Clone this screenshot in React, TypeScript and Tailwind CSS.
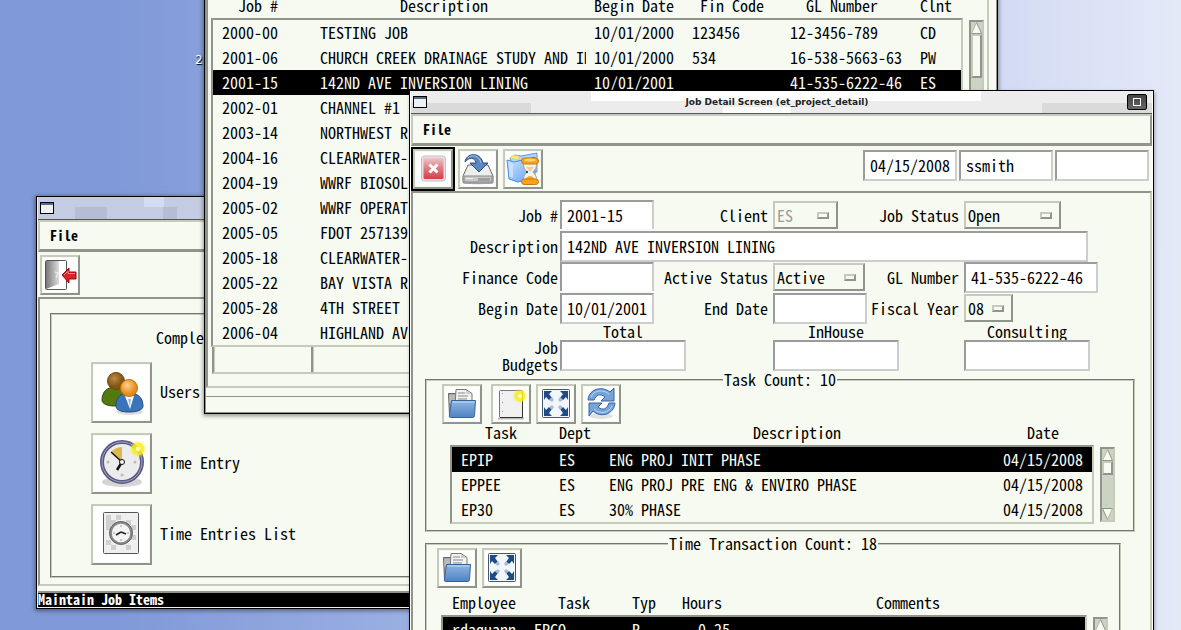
import React from "react";
import clsx from "clsx";

interface Job {
  job: string;
  description: string;
  begin?: string;
  fin?: string;
  gl?: string;
  client?: string;
}

const jobs: Job[] = [
  { job: "2000-00", description: "TESTING JOB", begin: "10/01/2000", fin: "123456", gl: "12-3456-789", client: "CD" },
  { job: "2001-06", description: "CHURCH CREEK DRAINAGE STUDY AND IMP", begin: "10/01/2000", fin: "534", gl: "16-538-5663-63", client: "PW" },
  { job: "2001-15", description: "142ND AVE INVERSION LINING", begin: "10/01/2001", gl: "41-535-6222-46", client: "ES" },
  { job: "2002-01", description: "CHANNEL #1" },
  { job: "2003-14", description: "NORTHWEST R" },
  { job: "2004-16", description: "CLEARWATER-" },
  { job: "2004-19", description: "WWRF BIOSOL" },
  { job: "2005-02", description: "WWRF OPERAT" },
  { job: "2005-05", description: "FDOT 257139" },
  { job: "2005-18", description: "CLEARWATER-" },
  { job: "2005-22", description: "BAY VISTA R" },
  { job: "2005-28", description: "4TH STREET" },
  { job: "2006-04", description: "HIGHLAND AV" },
];

const tasks = [
  { task: "EPIP", dept: "ES", description: "ENG PROJ INIT PHASE", date: "04/15/2008" },
  { task: "EPPEE", dept: "ES", description: "ENG PROJ PRE ENG & ENVIRO PHASE", date: "04/15/2008" },
  { task: "EP30", dept: "ES", description: "30% PHASE", date: "04/15/2008" },
];

const raised = "border-2 border-t-[#c6cabb] border-l-[#c6cabb] border-r-[#91948a] border-b-[#91948a]";
const sunken = "border-2 border-t-[#91948a] border-l-[#91948a] border-r-[#c6cabb] border-b-[#c6cabb]";

/* ---------- icons ---------- */

function Spark({ x, y, r }: { x: number; y: number; r: number }) {
  return (
    <g>
      <circle cx={x} cy={y} r={r} fill="#f8ef30" opacity="0.35" />
      <circle cx={x} cy={y} r={r * 0.8} fill="#f8ee1c" opacity="0.8" />
      <circle cx={x} cy={y} r={r * 0.3} fill="#fffbb0" />
    </g>
  );
}

function ExitIcon() {
  return (
    <svg viewBox="0 0 36 36" className="size-9">
      <defs>
        <linearGradient id="door" x1="0" x2="1">
          <stop offset="0" stopColor="#777" />
          <stop offset="1" stopColor="#ddd" />
        </linearGradient>
      </defs>
      <rect x="3.5" y="3.5" width="21" height="29" rx="1" fill="#fff" stroke="#555" />
      <path d="M4 4H17V27L4 32Z" fill="url(#door)" />
      <path d="M13 15l3 1-2 5" fill="none" stroke="#eee" strokeWidth="1.3" />
      <path d="M20 18l7-7v4h7v7h-7v4z" fill="#dc2222" stroke="#98090f" />
      <path d="M22 18l4-4v2.5h7" fill="none" stroke="#f58a8a" />
    </svg>
  );
}

function CloseIcon() {
  return (
    <svg viewBox="0 0 36 36" className="size-9">
      <defs>
        <linearGradient id="red" x1="0" x2="0" y1="0" y2="1">
          <stop offset="0" stopColor="#f0c4c8" />
          <stop offset="0.45" stopColor="#e08088" />
          <stop offset="1" stopColor="#d24048" />
        </linearGradient>
      </defs>
      <rect x="6.5" y="5" width="24" height="25" rx="3" fill="#e8dfe0" stroke="#c9bdbf" />
      <rect x="8.5" y="7" width="20" height="21" rx="1.5" fill="url(#red)" />
      <path d="M14.5 13.5l8 8m0-8l-8 8" stroke="#fff" strokeWidth="3" />
    </svg>
  );
}

function SaveIcon() {
  return (
    <svg viewBox="0 0 36 36" className="size-9">
      <ellipse cx="18" cy="31" rx="15" ry="2.5" fill="#ddd" />
      <path d="M8 14h20l5 11v6q0 1-1 1H4q-1 0-1-1v-6z" fill="#eeeeec" stroke="#666" />
      <path d="M4 25h28v6H4z" fill="#c8c8c8" stroke="#888" />
      <path d="M19 27v3m2-3v3m2-3v3m2-3v3m2-3v3m2-3v3" stroke="#777" />
      <path d="M6 27.5h7" stroke="#eee" />
      <path d="M5 11C6 2 20 0 23 12h5l-9 9-9-9h6C15 6 9 6 5 11z" fill="#5b86bd" stroke="#2b4f83" />
      <path d="M8 7c4-4 11-3 13 5" fill="none" stroke="#a9c4e6" />
    </svg>
  );
}

function PendingIcon() {
  return (
    <svg viewBox="0 0 36 36" className="size-9">
      <defs>
        <linearGradient id="pending" x1="0" x2="1" y1="0" y2="1">
          <stop offset="0" stopColor="#d4e8ff" />
          <stop offset="1" stopColor="#5d9ff2" />
        </linearGradient>
      </defs>
      <path d="M5 7l5-3 6 1 16-3v19H9z" fill="#b5d5fb" stroke="#5b95e8" />
      <path d="M5 7l3-3 6 1v4z" fill="#f6e68c" stroke="#dcc66a" strokeWidth="0.5" />
      <path d="M2 9l7 2 21-5v21l-17 4-9-3z" fill="url(#pending)" stroke="#4c8ae4" />
      <path d="M4 11l4 2v14l-4-2z" fill="#c9e1ff" />
      <path d="M18 11h14q0 7-4 10 4 3 4 10H18q0-7 4-10-4-3-4-10z" fill="#eef2f5" stroke="#b9a274" />
      <path d="M21 16h8l-4 5z" fill="#f4cf8d" />
      <path d="M19 30q3-5 6-5t6 5z" fill="#f4a52d" />
      <rect x="16.500" y="7" width="17" height="6" rx="3" fill="#f6a21c" stroke="#c97a08" />
      <ellipse cx="25" cy="9" rx="6" ry="1.5" fill="#fcd382" />
      <rect x="16.500" y="28" width="17" height="5.500" rx="2.700" fill="#f6a21c" stroke="#c97a08" />
      <circle cx="22" cy="21" r="1" fill="#222" />
    </svg>
  );
}

function FolderIcon() {
  return (
    <svg viewBox="0 0 36 36" className="size-9">
      <defs>
        <linearGradient id="folder" x1="0" x2="0" y1="0" y2="1">
          <stop offset="0" stopColor="#8fb6e3" />
          <stop offset="1" stopColor="#4f82c0" />
        </linearGradient>
      </defs>
      <path d="M4.500 7.500h8v22h-7z" fill="#a5a5a5" stroke="#666" />
      <path d="M5 10h7m-7 2h7m-7 2h7m-7 2h7" stroke="#ccc" />
      <path d="M12 3.500h10l6 4v12H11z" fill="#f2f2f0" stroke="#777" />
      <path d="M14 7h7m-7 3h10m-10 3h9" stroke="#888" />
      <path d="M22 4v4h5z" fill="#ccc" />
      <path d="M7.500 14.500h24l-1 15q0 2-2 2h-22q-2 0-1-3z" fill="url(#folder)" stroke="#34649f" />
      <path d="M8.500 16h22" stroke="#c5dbf3" />
    </svg>
  );
}

function NewDocIcon() {
  return (
    <svg viewBox="0 0 36 36" className="size-9">
      <path d="M5 32.500h26" stroke="#bbb" strokeWidth="2" />
      <rect x="6.500" y="4.500" width="23" height="27" rx="1" fill="#f1f0f1" stroke="#777" />
      <path d="M29.500 7v24.500H7" fill="none" stroke="#333" />
      <path d="M9.500 7v22" stroke="#999" strokeDasharray="1 8" />
      <Spark x={27} y={10} r={7} />
    </svg>
  );
}

function ExpandIcon() {
  return (
    <svg viewBox="0 0 36 36" className="size-9">
      <rect x="4.500" y="3.500" width="27" height="28" rx="1" fill="#f2f6fb" stroke="#49566e" />
      <path d="M6 5h8l-3 3 3 4-3 2-3-3-2 3z" fill="#1f4a85" />
      <path d="M30 5h-8l3 3-3 4 3 2 3-3 2 3z" fill="#1f4a85" />
      <path d="M6 30h8l-3-3 3-4-3-2-3 3-2-3z" fill="#1f4a85" />
      <path d="M30 30h-8l3-3-3-4 3-2 3 3 2-3z" fill="#1f4a85" />
      <path d="M11 14l3-3 2 3-2 2zM25 14l-3-3-2 3 2 2zM11 21l3 3 2-3-2-2zM25 21l-3 3-2-3 2-2z" fill="#a9bdd8" />
    </svg>
  );
}

function RefreshIcon() {
  return (
    <svg viewBox="0 0 36 36" className="size-9">
      <ellipse cx="18" cy="30" rx="12" ry="3" fill="#e2e2e2" />
      <path d="M5 14C6 2 20 0 27 6l4-4v13H18l4-4c-5-4-9-2-11 3z" fill="#76a3d9" stroke="#3465a4" />
      <path d="M32 17c-1 12-15 15-22 8l-4 5V17h13l-4 4c5 4 9 2 11-4z" fill="#76a3d9" stroke="#3465a4" />
      <path d="M8 11C11 4 20 3 26 8m3 12c-3 7-12 9-18 3" fill="none" stroke="#c2d8f2" />
    </svg>
  );
}

function UsersIcon() {
  return (
    <svg viewBox="0 0 57 57" className="size-[57px]">
      <defs>
        <radialGradient id="brown" cx="0.4" cy="0.35">
          <stop offset="0" stopColor="#b98a48" />
          <stop offset="1" stopColor="#80530f" />
        </radialGradient>
        <radialGradient id="orange" cx="0.4" cy="0.35">
          <stop offset="0" stopColor="#fdd28c" />
          <stop offset="1" stopColor="#e68c1c" />
        </radialGradient>
      </defs>
      <ellipse cx="37" cy="48" rx="13" ry="3" fill="#ddd" />
      <path d="M9 36c0-8 5-13 13-13 7 0 11 5 11 12 0 5-5 7-12 7-6 0-12-2-12-6z" fill="#527a10" stroke="#33500a" />
      <circle cx="23" cy="17" r="8.500" fill="url(#brown)" stroke="#6f4a11" />
      <path d="M23 42c0-9 5-13 13-13s14 4 14 13c0 4-6 6-14 6s-13-2-13-6z" fill="#3c74b8" stroke="#1f4a87" />
      <path d="M32 32h9l-4 13z" fill="#fff" />
      <path d="M35 35h3l-1 8z" fill="#9fb6d6" />
      <circle cx="36" cy="24" r="8.500" fill="url(#orange)" stroke="#bb6f10" />
    </svg>
  );
}

function TimeIcon() {
  return (
    <svg viewBox="0 0 57 57" className="size-[57px]">
      <ellipse cx="29" cy="47" rx="20" ry="5" fill="#d5d5d5" />
      <circle cx="29" cy="27" r="20" fill="#ececec" stroke="#5a5a83" strokeWidth="4" />
      <circle cx="29" cy="27" r="20" fill="none" stroke="#a0a0c0" />
      <path d="M29 27L18 17q5-5 11-5z" fill="#dcb94e" />
      <circle cx="29" cy="40" r="1.5" fill="#bbb" />
      <circle cx="15" cy="27" r="1.5" fill="#bbb" />
      <circle cx="42" cy="27" r="1.5" fill="#bbb" />
      <path d="M29 27L18 17" stroke="#111" strokeWidth="1.500" />
      <path d="M29 27l-5 8" stroke="#111" strokeWidth="2.500" />
      <circle cx="29" cy="27" r="2.500" fill="#fff" stroke="#111" />
      <Spark x={45} y={14} r={8} />
    </svg>
  );
}

function TimeListIcon() {
  return (
    <svg viewBox="0 0 57 57" className="size-[57px]">
      <rect x="10.500" y="6.500" width="35" height="41" rx="1" fill="#efefef" stroke="#555" />
      <path d="M13 9h5v5h-5zM18 14h5v5h-5zM23 9h5v5h-5zM13 19h5v5h-5zM33 14h5v5h-5zM38 19h5v5h-5zM13 34h5v5h-5zM38 29h5v5h-5zM18 39h5v5h-5zM33 39h5v5h-5zM13 14h5v5h-5z" fill="#cfcfcf" />
      <circle cx="28" cy="27" r="10.500" fill="#f4f4f4" stroke="#888" strokeWidth="2.500" />
      <circle cx="28" cy="27" r="11.500" fill="none" stroke="#555" strokeWidth="0.700" />
      <path d="M28 26l-5 3m5-3l5 2" stroke="#222" strokeWidth="1.600" />
      <path d="M28 19v2m0 12v2m-8-8h2m12 0h2" stroke="#999" />
    </svg>
  );
}

/* ---------- widgets ---------- */

interface ToolButtonProps {
  label: string;
  focused?: boolean;
  className?: string;
  children: React.ReactNode;
}

function ToolButton({ label, focused, className, children }: ToolButtonProps) {
  return (
    <button
      type="button"
      aria-label={label}
      className={clsx(
        "shrink-0 bg-white shadow-[inset_0_0_0_1px_#f7faf0]",
        raised,
        focused && "outline-2 outline-black",
        className
      )}
    >
      {children}
    </button>
  );
}

function TitleIcon() {
  return <span className="relative block h-3 w-3.5 border border-black bg-[#eef2f4] shadow-[inset_0_2px_0_#4f6b94]" />;
}

function MenuBar() {
  return (
    <nav className={clsx("flex h-8 items-center border-b-3 pb-0.5 pl-2.5 text-sm leading-4 font-bold", raised)}>
      <button type="button">File</button>
    </nav>
  );
}

interface FieldProps {
  id: string;
  label?: string;
  value?: string;
  className?: string;
}

function Field({ id, label, value = "", className }: FieldProps) {
  return (
    <input
      id={id}
      aria-label={label}
      defaultValue={value}
      className={clsx(
        "min-w-0 border-2 border-t-[#9b9b9e] border-l-[#9b9b9e] border-r-[#cdcdd0] border-b-[#cdcdd0] bg-white pb-0.5 pl-[5px]",
        className
      )}
    />
  );
}

function Choice({ id, value, disabled, className }: FieldProps & { disabled?: boolean }) {
  return (
    <div className={clsx("relative mt-px h-7", className)}>
      <select
        id={id}
        disabled={disabled}
        className={clsx("h-full w-full appearance-none pl-0.5 leading-6 disabled:text-[#9c9c96] disabled:opacity-100", raised)}
      >
        <option>{value}</option>
      </select>
      <span className={clsx("pointer-events-none absolute top-[11px] right-[9px] h-[7px] w-3", raised)} />
    </div>
  );
}

interface LabelProps {
  htmlFor: string;
  first?: boolean;
  children: string;
}

function Label({ htmlFor, first, children }: LabelProps) {
  return (
    <label htmlFor={htmlFor} className={clsx("text-right leading-[30px] whitespace-nowrap", first ? "pr-0.5" : "pr-[5px]")}>
      {children}
    </label>
  );
}

function Arrow({ down }: { down?: boolean }) {
  return (
    <svg viewBox="0 0 11 12" className={clsx("h-3 w-[11px] shrink-0", down && "rotate-180")}>
      <path d="M5.500 1L10.500 11.500H0.500z" fill="#f7faf0" />
      <path d="M5.500 0.500L0.500 11.500" stroke="#b5baa9" />
      <path d="M5.500 0.500L10.500 11.500H0.500" fill="none" stroke="#91948a" />
    </svg>
  );
}

function ScrollBar({ thumb }: { thumb: string }) {
  return (
    <div className={clsx("flex w-[15px] shrink-0 flex-col bg-[#cbd3c2]", sunken)}>
      <Arrow />
      <div className={clsx("bg-[#f7faf0]", raised, thumb)} />
      <div className="mt-auto">
        <Arrow down />
      </div>
    </div>
  );
}

/* ---------- windows ---------- */

function MainMenuWindow() {
  const items = [
    { label: "Users", icon: <UsersIcon /> },
    { label: "Time Entry", icon: <TimeIcon /> },
    { label: "Time Entries List", icon: <TimeListIcon /> },
  ];

  return (
    <section className="absolute top-[196px] left-[36px] w-[700px] border border-black bg-[#f7faf0] shadow-[0_1px_4px_1px_rgba(0,0,0,0.4)]">
      <div className="border-x border-b border-[#eef0ee]">
        <header className="relative flex h-[23px] items-center border-b border-[#555] bg-[#c3cce2] pl-0.5">
          <span className="absolute bottom-0 left-[37px] h-3 w-8 bg-[#b4bdd3]" />
          <span className="absolute top-0 left-[106px] h-2.5 w-5 bg-[#d3dcf3]" />
          <span className="absolute bottom-0 left-[125px] h-3 w-3.5 bg-[#b4bdd3]" />
          <TitleIcon />
        </header>
        <MenuBar />
        <div className="px-0.5 pt-[3px] pb-0.5">
          <ToolButton label="Exit" className="block size-10">
            <ExitIcon />
          </ToolButton>
        </div>
        <div className={clsx("px-2.5 pt-3.5 pb-1.5", sunken)}>
          <div className="border-2 border-[#c6cabb] px-[39px] pt-3.5 pb-[11px] [border-style:groove]">
            <h2 className="pb-4 pl-[65px] leading-[17px]">Complete</h2>
            <ul className="flex flex-col gap-2.5">
              {items.map((item) => (
                <li key={item.label} className="flex items-center gap-2">
                  <ToolButton label={item.label} className="size-[61px]">
                    {item.icon}
                  </ToolButton>
                  <span className="pb-1">{item.label}</span>
                </li>
              ))}
            </ul>
          </div>
        </div>
        <footer className="mt-[5px] border-t-2 border-[#91948a] bg-black pb-0.5 text-sm leading-3 font-bold text-white">
          Maintain Job Items
        </footer>
      </div>
    </section>
  );
}

const jobCols = "grid grid-cols-[80px_256px_80px_80px_112px_32px] gap-[18px] px-[9px]";

function JobListWindow() {
  return (
    <section className="absolute top-[-6px] left-[204px] w-[794px] border border-t-0 border-black bg-[#f7faf0] shadow-[0_1px_4px_1px_rgba(0,0,0,0.4)]">
      <div className="border-x border-b border-[#91948a]">
        <div className="mr-[7px] border-r-2 border-b-2 border-l-2 border-r-[#c6cabb] border-b-[#c6cabb] border-l-[#91948a] pb-3 pl-[3px]">
          <div className="flex gap-1.5">
            <table className="block">
              <thead className="block px-0.5">
                <tr className={clsx("h-6 leading-[22px]", jobCols)}>
                  <th className="pr-2 font-normal">Job #</th>
                  <th className="pr-2 font-normal">Description</th>
                  <th className="font-normal">Begin Date</th>
                  <th className="font-normal">Fin Code</th>
                  <th className="pr-2 font-normal">GL Number</th>
                  <th className="font-normal">Clnt</th>
                </tr>
              </thead>
              <tbody className={clsx("block", sunken)}>
                {jobs.map((job) => (
                  <tr
                    key={job.job}
                    className={clsx("h-[25px] leading-6 whitespace-nowrap", jobCols, job.job === "2001-15" && "bg-black text-[#f7faf0]")}
                  >
                    <td>{job.job}</td>
                    <td className="-mr-2.5 overflow-hidden">{job.description}</td>
                    <td>{job.begin}</td>
                    <td>{job.fin}</td>
                    <td>{job.gl}</td>
                    <td>{job.client}</td>
                  </tr>
                ))}
              </tbody>
            </table>
            <div className="flex pt-[26px]">
              <ScrollBar thumb="h-11" />
            </div>
          </div>
          <div className="mx-px flex h-[27px] w-[750px] border-b-2 border-l-2 border-b-[#c6cabb] border-l-[#91948a]">
            <div className="w-[99px] border-r-2 border-l border-r-[#91948a] border-l-[#c6cabb]" />
            <div className="grow border-l border-[#c6cabb]" />
          </div>
        </div>
        <div className="mt-2 h-4 border-t border-[#91948a]" />
      </div>
    </section>
  );
}

const taskCols = "grid grid-cols-[80px_32px_376px_80px] gap-[18px] px-[9px]";
const timeCols = "grid grid-cols-[64px_80px_24px_56px_320px] gap-[18px] pr-[17px] pl-[9px]";

function TaskGroup() {
  return (
    <fieldset className="mt-[5px] ml-3 w-[710px] border-2 border-[#c6cabb] pb-1.5 [border-style:groove]">
      <legend className="mx-auto h-2 px-px leading-1.5">Task Count: 10</legend>
      <div className="flex gap-[5px] pl-[15px]">
        <ToolButton label="Open task" className="mr-1 size-10">
          <FolderIcon />
        </ToolButton>
        <ToolButton label="New task" className="size-10">
          <NewDocIcon />
        </ToolButton>
        <ToolButton label="Expand tasks" className="size-10">
          <ExpandIcon />
        </ToolButton>
        <ToolButton label="Refresh tasks" className="size-10">
          <RefreshIcon />
        </ToolButton>
      </div>
      <div className="flex gap-1.5 pl-[23px]">
        <table className="block">
          <thead className="block px-0.5">
            <tr className={clsx("h-[21px] leading-4", taskCols)}>
              <th className="font-normal">Task</th>
              <th className="font-normal">Dept</th>
              <th className="font-normal">Description</th>
              <th className="font-normal">Date</th>
            </tr>
          </thead>
          <tbody className={clsx("block", sunken)}>
            {tasks.map((task, index) => (
              <tr key={task.task} className={clsx("h-[25px] leading-6", taskCols, index === 0 && "bg-black text-[#f7faf0]")}>
                <td>{task.task}</td>
                <td>{task.dept}</td>
                <td>{task.description}</td>
                <td>{task.date}</td>
              </tr>
            ))}
          </tbody>
        </table>
        <div className="flex pt-[23px] pb-0.5">
          <ScrollBar thumb="h-3.5" />
        </div>
      </div>
    </fieldset>
  );
}

function TimeGroup() {
  return (
    <fieldset className="mt-2 ml-3 w-[696px] border-2 border-[#c6cabb] [border-style:groove]">
      <legend className="mx-auto h-2 px-px leading-1.5">Time Transaction Count: 18</legend>
      <div className="flex gap-[5px] pl-2.5">
        <ToolButton label="Open transaction" className="size-10">
          <FolderIcon />
        </ToolButton>
        <ToolButton label="Expand transactions" className="size-10">
          <ExpandIcon />
        </ToolButton>
      </div>
      <div className="flex gap-1.5 pl-3.5">
        <table className="block">
          <thead className="block px-0.5">
            <tr className={clsx("h-[27px] leading-7", timeCols)}>
              <th className="font-normal">Employee</th>
              <th className="font-normal">Task</th>
              <th className="font-normal">Typ</th>
              <th className="font-normal">Hours</th>
              <th className="font-normal">Comments</th>
            </tr>
          </thead>
          <tbody className={clsx("block", sunken)}>
            <tr className={clsx("h-[25px] bg-black leading-6 text-[#f7faf0]", timeCols)}>
              <td>rdaquann</td>
              <td>EPCO</td>
              <td>R</td>
              <td className="text-right">0.25</td>
              <td></td>
            </tr>
          </tbody>
        </table>
        <div className="flex h-20 pt-[29px]">
          <ScrollBar thumb="h-3.5" />
        </div>
      </div>
    </fieldset>
  );
}

function JobDetailWindow() {
  return (
    <section className="absolute top-[90px] left-[409px] w-[745px] border border-black bg-[#f7faf0] shadow-[1px_2px_4px_rgba(0,0,0,0.3)]">
      <div className="border-x border-white">
        <header className="relative flex h-[23px] items-center border-b border-[#555] bg-[#ececec] pl-0.5">
          <span className="absolute bottom-0 left-0 h-2.5 w-[120px] bg-[#dadada]" />
          <span className="absolute top-0 left-[180px] h-2.5 w-[390px] bg-white" />
          <span className="absolute bottom-0 left-[312px] h-1.5 w-[68px] bg-white" />
          <span className="absolute right-0 bottom-0 h-2.5 w-[110px] bg-[#dadada]" />
          <TitleIcon />
          <h1 className="relative grow text-center font-['DejaVu_Sans'] text-[9px] font-bold text-[#222]">
            Job Detail Screen (et_project_detail)
          </h1>
          <button
            type="button"
            aria-label="Maximize"
            className="relative mr-[5px] flex h-4 w-5 items-center justify-center rounded-xs border border-black bg-linear-to-b from-[#444] to-[#666]"
          >
            <span className="size-2 border border-white" />
          </button>
        </header>
        <MenuBar />
        <div className="flex items-start gap-[5px] pt-[3px] pr-[3px] pb-0.5 pl-0.5">
          <ToolButton label="Close" focused className="size-10">
            <CloseIcon />
          </ToolButton>
          <ToolButton label="Save" className="size-10">
            <SaveIcon />
          </ToolButton>
          <ToolButton label="Pending" className="size-10">
            <PendingIcon />
          </ToolButton>
          <div className="mt-px ml-auto flex gap-0.5">
            <Field id="today" label="Date" value="04/15/2008" className="h-[31px] w-[94px]" />
            <Field id="user" label="User" value="ssmith" className="h-[31px] w-[94px]" />
            <Field id="extra" label="Mode" className="h-[31px] w-[94px]" />
          </div>
        </div>
        <div className={clsx("pb-4", sunken)}>
          <form className="grid grid-cols-[147px_94px_119px_94px_97px_1fr] grid-rows-[31px_31px_31px_31px_16px_31px] items-start pt-[7px]">
            <Label htmlFor="job" first>Job #</Label>
            <Field id="job" value="2001-15" className="h-[29px] border-b-0" />
            <Label htmlFor="client">Client</Label>
            <Choice id="client" value="ES" disabled className="w-[65px]" />
            <Label htmlFor="status">Job Status</Label>
            <Choice id="status" value="Open" className="w-[97px]" />

            <Label htmlFor="description" first>Description</Label>
            <Field id="description" value="142ND AVE INVERSION LINING" className="col-span-5 h-[31px] w-[528px]" />

            <Label htmlFor="finance" first>Finance Code</Label>
            <Field id="finance" className="h-[29px] border-b-0" />
            <Label htmlFor="active">Active Status</Label>
            <Choice id="active" value="Active" className="w-[92px]" />
            <Label htmlFor="gl">GL Number</Label>
            <Field id="gl" value="41-535-6222-46" className="h-[31px] w-[134px]" />

            <Label htmlFor="begin" first>Begin Date</Label>
            <Field id="begin" value="10/01/2001" className="h-[31px]" />
            <Label htmlFor="end">End Date</Label>
            <Field id="end" className="h-[31px]" />
            <Label htmlFor="year">Fiscal Year</Label>
            <Choice id="year" value="08" className="w-[49px]" />

            <label htmlFor="total" className="col-span-2 col-start-2 w-[126px] text-center leading-3.5">Total</label>
            <label htmlFor="inhouse" className="col-span-2 w-[126px] text-center leading-3.5">InHouse</label>
            <label htmlFor="consulting" className="w-[126px] text-center leading-3.5">Consulting</label>

            <div className="flex flex-col self-center pr-0.5 text-right leading-[17px]">
              <span>Job</span>
              <span>Budgets</span>
            </div>
            <Field id="total" className="col-span-2 h-[31px] w-[126px]" />
            <Field id="inhouse" className="col-span-2 h-[31px] w-[126px]" />
            <Field id="consulting" className="h-[31px] w-[126px]" />
          </form>
          <TaskGroup />
          <TimeGroup />
        </div>
      </div>
    </section>
  );
}

export default function App() {
  return (
    <main className="relative h-screen w-full overflow-hidden bg-linear-to-r from-[#8099d8] from-10% to-[#e4e9f8] font-['Noto_Sans_Mono_CJK_SC','Liberation_Mono',monospace] text-base leading-4 text-black">
      <span className="absolute top-[52px] left-[195px] font-['DejaVu_Sans'] text-xs text-white [text-shadow:1px_1px_1px_#000]">2</span>
      <MainMenuWindow />
      <JobListWindow />
      <JobDetailWindow />
    </main>
  );
}
